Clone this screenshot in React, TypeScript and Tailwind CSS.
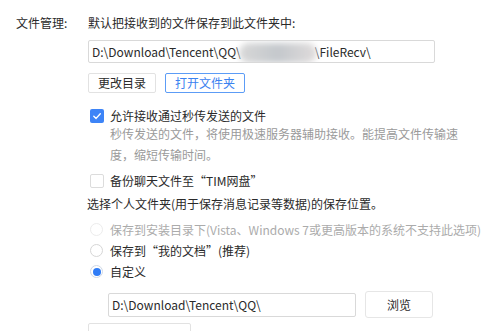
import React from "react";

const FONT = '"Microsoft YaHei", "Noto Sans CJK SC", "Noto Sans", sans-serif';

function Checkbox({ checked }: { checked?: boolean }) {
  if (checked) {
    return (
      <span className="w-[14px] h-[14px] rounded-[2px] bg-[#3d84f7] flex items-center justify-center shrink-0">
        <svg width="10" height="10" viewBox="0 0 10 10" fill="none">
          <path d="M1.8 5.2 L4.1 7.4 L8.3 2.8" stroke="#fff" strokeWidth="1.4" strokeLinecap="round" strokeLinejoin="round" />
        </svg>
      </span>
    );
  }
  return <span className="w-[14px] h-[14px] rounded-[2px] border border-[#dcdcdc] bg-white shrink-0" />;
}

function Radio({ checked, disabled }: { checked?: boolean; disabled?: boolean }) {
  return (
    <span
      className={`w-[13px] h-[13px] rounded-full border flex items-center justify-center shrink-0 bg-white ${
        disabled ? "border-[#ececec]" : checked ? "border-[#cfd8e6]" : "border-[#d6d6d6]"
      }`}
    >
      {checked && <span className="w-[8px] h-[8px] rounded-full bg-[#2f7cf6]" />}
    </span>
  );
}

export default function App() {
  return (
    <div className="w-[486px] h-[331px] overflow-hidden bg-white text-[12px] text-[#2a2a2a] flex items-start" style={{ fontFamily: FONT }}>
      {/* label column */}
      <div className="w-[88px] shrink-0 pl-[16px] pt-[14px] leading-[18px]">文件管理:</div>

      {/* content column */}
      <div className="flex flex-col pt-[14px] shrink-0">
        <div className="h-[18px] leading-[18px] shrink-0">默认把接收到的文件保存到此文件夹中:</div>

        <div className="mt-[8px] w-[347px] h-[23px] shrink-0 border border-[#d9d9d9] rounded-[2px] px-[3px] flex items-center whitespace-nowrap overflow-hidden">
          <span>D:\Download\Tencent\QQ\</span>
          <span className="relative inline-block w-[74px] h-[20px] shrink-0">
            <span className="absolute inset-x-[-2px] top-[1px] bottom-[-1px] rounded-[10px] bg-gradient-to-r from-[#d8d8d8] via-[#c4c8cc] to-[#e0dcdc] blur-[3px]" />
          </span>
          <span>\FileRecv\</span>
        </div>

        <div className="mt-[10px] flex gap-[9px] shrink-0">
          <button className="w-[68px] h-[20px] border border-[#e2e2e2] rounded-[2px] bg-white text-[12px] leading-none text-[#2a2a2a]">
            更改目录
          </button>
          <button className="w-[80px] h-[20px] border border-[#5c9cf6] rounded-[2px] bg-white text-[12px] leading-none text-[#3b82f0]">
            打开文件夹
          </button>
        </div>

        <div className="mt-[14px] h-[18px] shrink-0 flex items-center gap-[6px] pl-[2px]">
          <Checkbox checked />
          <span>允许接收通过秒传发送的文件</span>
        </div>
        <div className="mt-[-2px] pl-[22px] w-[380px] shrink-0 leading-[21px] text-[#9a9a9a]">
          秒传发送的文件，将使用极速服务器辅助接收。能提高文件传输速度，缩短传输时间。
        </div>

        <div className="mt-[7px] h-[18px] shrink-0 flex items-center gap-[6px] pl-[2px]">
          <Checkbox />
          <span>备份聊天文件至“TIM网盘”</span>
        </div>

        <div className="mt-[5px] h-[18px] shrink-0 leading-[18px] ml-[-1px]">选择个人文件夹(用于保存消息记录等数据)的保存位置。</div>

        <div className="mt-[6px] flex flex-col pl-[2px] shrink-0">
          <div className="h-[21px] flex items-center gap-[7px] whitespace-nowrap text-[#ababab]">
            <Radio disabled />
            <span>保存到安装目录下(Vista、Windows 7或更高版本的系统不支持此选项)</span>
          </div>
          <div className="h-[21px] flex items-center gap-[7px]">
            <Radio />
            <span>保存到“我的文档”(推荐)</span>
          </div>
          <div className="h-[21px] flex items-center gap-[7px]">
            <Radio checked />
            <span>自定义</span>
          </div>
        </div>

        <div className="mt-[9px] pl-[20px] flex items-center gap-[9px] shrink-0">
          <div className="w-[248px] h-[24px] border border-[#d9d9d9] rounded-[2px] px-[3px] flex items-center">
            D:\Download\Tencent\QQ\
          </div>
          <button className="w-[68px] h-[27px] border border-[#e6e6e6] rounded-[3px] bg-white text-[12px] leading-none text-[#2a2a2a]">
            浏览
          </button>
        </div>

        <div className="mt-[5px] w-[103px] h-[22px] border border-[#e2e2e2] rounded-[2px] shrink-0" />
      </div>
    </div>
  );
}
